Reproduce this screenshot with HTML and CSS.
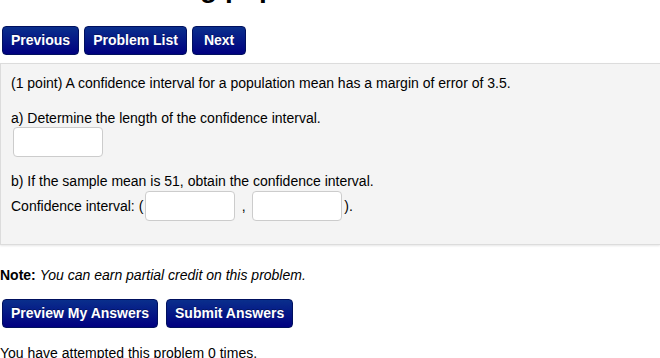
FILE: index.html
```html
<!DOCTYPE html>
<html lang="en">
<head>
    <meta charset="UTF-8">
    <title>Problem</title>
    <link rel="stylesheet" href="styles.css">
</head>
<body>
    <h1 class="page-title">Estimating population mean</h1>

    <div class="nav-buttons">
        <a href="#" class="btn">Previous</a>
        <a href="#" class="btn">Problem List</a>
        <a href="#" class="btn btn-next">Next</a>
    </div>

    <div class="problem-box">
        <p>(1 point) A confidence interval for a population mean has a margin of error of 3.5.</p>

        <p class="part">a) Determine the length of the confidence interval.</p>
        <input type="text" class="answer">

        <p class="part part-b">b) If the sample mean is 51, obtain the confidence interval.</p>
        <div class="interval-row">
            <span>Confidence interval: (</span>
            <input type="text" class="answer">
            <span class="comma">,</span>
            <input type="text" class="answer">
            <span>).</span>
        </div>
    </div>

    <p class="note"><strong>Note:</strong> <em>You can earn partial credit on this problem.</em></p>

    <div class="submit-buttons">
        <button class="btn">Preview My Answers</button>
        <button class="btn">Submit Answers</button>
    </div>

    <p class="attempts">You have attempted this problem 0 times.</p>
</body>
</html>
```

FILE: styles.css
```css
/* General Styles */
body {
    font-family: "Liberation Sans", Arial, sans-serif;
    font-size: 14px;
    color: #000000;
    margin: 0;
    padding: 0;
    background-color: #ffffff;
}

.page-title {
    font-size: 28px;
    font-weight: bold;
    margin: -29px 0 0 0;
    padding-left: 74px;
    line-height: 34px;
    white-space: nowrap;
}

/* Buttons */
.btn {
    display: inline-block;
    font-family: "Liberation Sans", Arial, sans-serif;
    font-size: 14px;
    font-weight: bold;
    color: #ffffff;
    text-decoration: none;
    text-shadow: 0 -1px 0 rgba(0, 0, 0, 0.3);
    background: linear-gradient(#0a2f8c, #000080);
    border: 1px solid #00105e;
    border-radius: 4px;
    padding: 0 8px;
    height: 29px;
    line-height: 27px;
    box-sizing: border-box;
    cursor: pointer;
}

.btn-next {
    padding: 0 11px;
}

.nav-buttons {
    display: flex;
    gap: 5px;
    padding-left: 2px;
    margin-top: 21px;
}

.problem-box {
    background: #f4f4f4;
    border: 1px solid #dcdcdc;
    border-right: none;
    box-shadow: 0 1px 2px rgba(0, 0, 0, 0.1);
    margin-top: 8px;
    padding: 10px 10px 23px 10px;
}

.problem-box p {
    margin: 0;
    line-height: 18px;
}

.part {
    margin-top: 17px !important;
}

.part-b {
    margin-top: 15px !important;
}

.answer {
    display: block;
    width: 90px;
    height: 30px;
    box-sizing: border-box;
    border: 1px solid #cccccc;
    border-radius: 4px;
    background: #ffffff;
    margin: 0 0 0 2px;
}

.interval-row {
    display: flex;
    align-items: center;
    margin-top: 1px;
}

.interval-row .answer {
    margin: 0 2px;
}

.comma {
    width: 13px;
    text-align: center;
}

.note {
    margin: 21px 0 0 0;
    line-height: 18px;
}

.submit-buttons {
    display: flex;
    gap: 8px;
    padding-left: 2px;
    margin-top: 15px;
}

.attempts {
    margin: 16px 0 0 0;
    line-height: 18px;
}
```
